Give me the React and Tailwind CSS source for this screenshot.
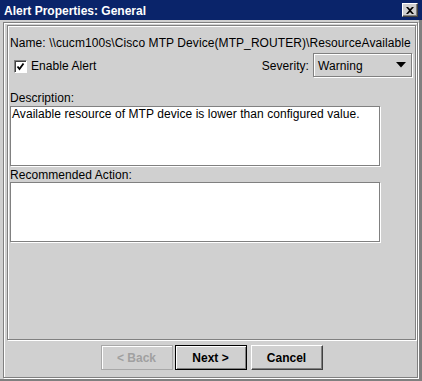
import React from "react";

const font = { fontFamily: '"Liberation Sans", Arial, sans-serif' };

function Etched({ className = "", children }) {
  return (
    <div
      className={
        "border border-[#808080] shadow-[inset_1px_1px_0_#ffffff,1px_1px_0_#ffffff] " +
        className
      }
    >
      {children}
    </div>
  );
}

function TextArea({ children }) {
  return (
    <div className="ml-0 w-[370px] h-[60px] bg-white border border-[#808080] shadow-[1px_1px_0_#ffffff] pl-[1px] text-[12px] leading-[14px] text-black">
      {children}
    </div>
  );
}

export default function App() {
  return (
    <div
      className="w-[422px] h-[381px] bg-[#d0d0d0] flex flex-col overflow-hidden"
      style={font}
    >
      {/* Title bar */}
      <div className="h-[20px] shrink-0 bg-[#0a246a] flex items-center justify-between pl-[4px] pr-[4px]">
        <span className="text-white font-bold text-[12px] leading-[20px] pt-px">
          Alert Properties: General
        </span>
        <div className="w-[16px] h-[14px] bg-[#d0d0d0] border-t border-l border-white border-r border-b border-r-[#404040] border-b-[#404040] shadow-[inset_-1px_-1px_0_#808080] flex items-center justify-center">
          <svg width="8" height="7" viewBox="0 0 8 7">
            <path d="M0 0 L2 0 L4 2 L6 0 L8 0 L5 3.5 L8 7 L6 7 L4 5 L2 7 L0 7 L3 3.5 Z" fill="#000" />
          </svg>
        </div>
      </div>

      {/* Body */}
      <div className="flex-1 flex flex-col pl-[3px] pt-[2px] pr-[1px] pb-[1px] border-r-[3px] border-b-[2px] border-[#808080]">
        <Etched className="flex-1 flex flex-col pl-[3px] pt-[2px] pr-[1px]">
          {/* Inner panel */}
          <Etched className="flex-1 flex flex-col pl-[2px] pr-[3px] text-[12px] leading-[14px] text-black tracking-[0.06px]">
            <div className="mt-[10px] h-[14px] whitespace-nowrap tracking-[0.08px]">
              Name: \\cucm100s\Cisco MTP Device(MTP_ROUTER)\ResourceAvailable
            </div>

            <div className="mt-[3px] h-[24px] flex items-center justify-between">
              <div className="flex items-center pl-[4px] pt-[2px]">
                <div className="w-[13px] h-[13px] bg-white border-t border-l border-[#808080] border-r border-b border-r-white border-b-white shadow-[inset_1px_1px_0_#404040] flex items-center justify-center">
                  <svg width="9" height="9" viewBox="0 0 9 9">
                    <path d="M1.5 4.5 L3.5 7 L7.5 1.5" fill="none" stroke="#000" strokeWidth="1.8" />
                  </svg>
                </div>
                <span className="ml-[4px]">Enable Alert</span>
              </div>
              <div className="flex items-center">
                <span className="mr-[4px] pt-[2px]">Severity:</span>
                <div className="w-[99px] h-[24px] border border-[#808080] shadow-[inset_1px_1px_0_#ffffff,1px_1px_0_#ffffff] flex items-center justify-between pl-[4px] pr-[5px]">
                  <span className="pt-[2px]">Warning</span>
                  <svg width="10" height="6" viewBox="0 0 10 6">
                    <path d="M0 0 L10 0 L5 5.5 Z" fill="#000" />
                  </svg>
                </div>
              </div>
            </div>

            <div className="mt-[14px] h-[14px]">Description:</div>
            <div className="mt-[1px]">
              <TextArea>Available resource of MTP device is lower than configured value.</TextArea>
            </div>

            <div className="mt-[2px] h-[14px]">Recommended Action:</div>
            <div className="mt-0">
              <TextArea />
            </div>
          </Etched>

          {/* Buttons */}
          <div className="h-[37px] shrink-0 flex justify-center pt-[5px] gap-[2px]">
            <div className="w-[72px] h-[25px] border border-[#a8a8a8] shadow-[inset_1px_1px_0_#ffffff] flex items-center justify-center font-bold text-[12px] text-[#a0a0a0]">
              &lt; Back
            </div>
            <div className="w-[72px] h-[25px] border border-[#000] shadow-[inset_1px_1px_0_#ffffff,inset_-1px_-1px_0_#808080] flex items-center justify-center font-bold text-[12px] text-black">
              Next &gt;
            </div>
            <div className="ml-[2px] w-[72px] h-[25px] border border-t-white border-l-white border-r-[#404040] border-b-[#404040] shadow-[inset_-1px_-1px_0_#808080] flex items-center justify-center font-bold text-[12px] text-black">
              Cancel
            </div>
          </div>
        </Etched>
      </div>
    </div>
  );
}
